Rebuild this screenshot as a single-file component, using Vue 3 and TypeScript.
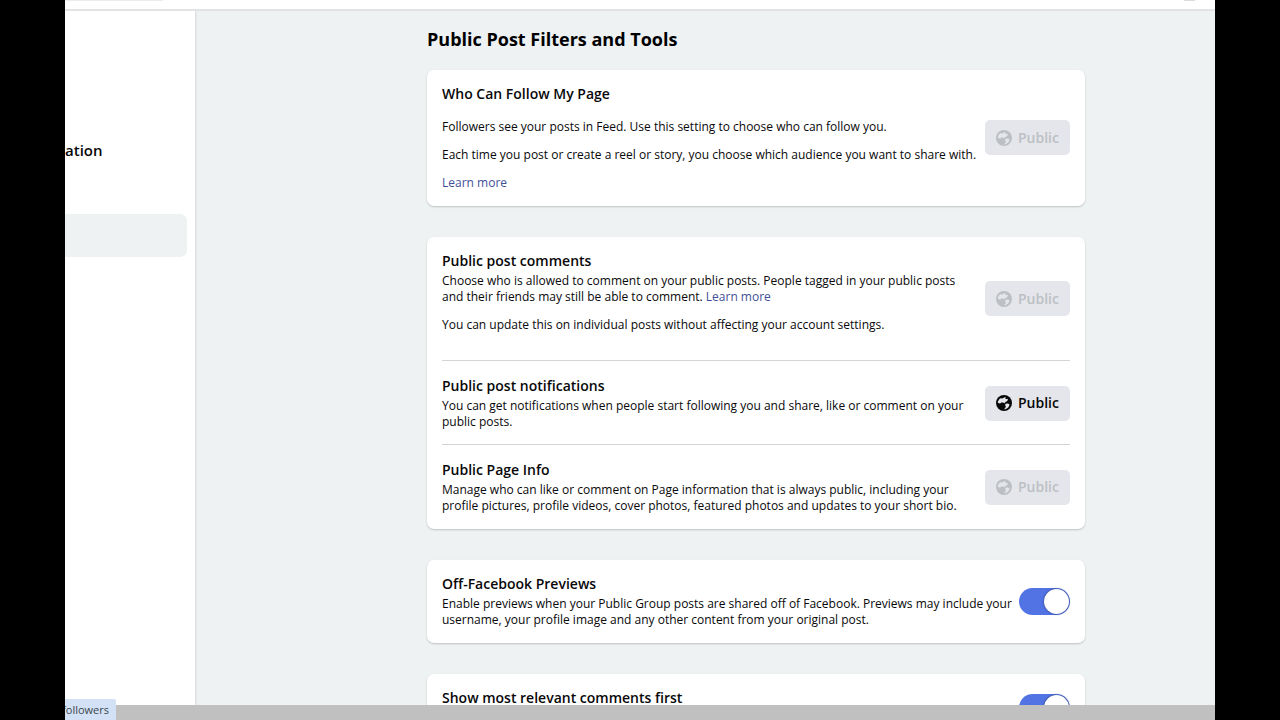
<script setup lang="ts">
import { ref } from 'vue'

interface AudienceRow {
  id: string
  title: string
  text: string
  link?: string
  note?: string
  enabled: boolean
}

const rows: AudienceRow[] = [
  {
    id: 'comments',
    title: 'Public post comments',
    text: 'Choose who is allowed to comment on your public posts. People tagged in your public posts and their friends may still be able to comment.',
    link: 'Learn more',
    note: 'You can update this on individual posts without affecting your account settings.',
    enabled: false,
  },
  {
    id: 'notifications',
    title: 'Public post notifications',
    text: 'You can get notifications when people start following you and share, like or comment on your public posts.',
    enabled: true,
  },
  {
    id: 'info',
    title: 'Public Page Info',
    text: 'Manage who can like or comment on Page information that is always public, including your profile pictures, profile videos, cover photos, featured photos and updates to your short bio.',
    enabled: false,
  },
]

const previews = ref(true)
const relevant = ref(true)
</script>

<template>
  <div class="frame">
    <svg class="defs" aria-hidden="true">
      <symbol id="globe" viewBox="0 0 16 16">
        <circle cx="8" cy="8" r="8" fill="currentColor" />
        <path
          class="land"
          d="M1.7 7.6C2 5.8 3 4.2 4.6 3.2L6.4 3.6 8 2.4 9.8 2.2 9.3 3.6 10.4 4.2 11.4 3.8 12 4.8 10.9 6.2 9.4 6.9 8.6 8.3 7 7.6 5.2 7.4 4.2 8.4 2.8 8.2Z"
        />
        <path class="land" d="M9.8 8.8L11.4 8.4 13.2 9 13.4 10.2 12.2 12.4 10.4 13.8 7.8 14.4 9.4 12.8 9.8 11.2 9 10Z" />
      </symbol>
    </svg>

    <header class="topbar">
      <span class="tab"></span>
      <span class="mark"></span>
    </header>
    <div class="body">
      <aside class="sidebar">
        <h2 class="side-title">ation</h2>
        <a class="side-item" href="#" aria-current="page"></a>
      </aside>

      <main class="content">
        <h1 class="page-title">Public Post Filters and Tools</h1>

        <section class="card">
          <div class="row">
            <div class="copy">
              <h3 class="title spaced">Who Can Follow My Page</h3>
              <p class="text">Followers see your posts in Feed. Use this setting to choose who can follow you.</p>
              <p class="text para">
                Each time you post or create a reel or story, you choose which audience you want to share with.
              </p>
              <p class="text para"><a class="link" href="#">Learn more</a></p>
            </div>
            <button class="audience" type="button" disabled>
              <svg class="globe" aria-hidden="true"><use href="#globe" /></svg>Public
            </button>
          </div>
        </section>

        <section class="card">
          <div v-for="row in rows" :key="row.id" class="row">
            <div class="copy">
              <h3 class="title">{{ row.title }}</h3>
              <p class="text">
                {{ row.text }} <a v-if="row.link" class="link" href="#">{{ row.link }}</a>
              </p>
              <p v-if="row.note" class="text para note">{{ row.note }}</p>
            </div>
            <button class="audience" type="button" :disabled="!row.enabled">
              <svg class="globe" aria-hidden="true"><use href="#globe" /></svg>Public
            </button>
          </div>
        </section>

        <section class="card">
          <div class="row">
            <div class="copy">
              <h3 class="title"><label for="previews">Off-Facebook Previews</label></h3>
              <p class="text">
                Enable previews when your Public Group posts are shared off of Facebook. Previews may include your
                username, your profile image and any other content from your original post.
              </p>
            </div>
            <input id="previews" v-model="previews" class="switch" type="checkbox" role="switch" />
          </div>
        </section>

        <section class="card">
          <div class="row short">
            <div class="copy">
              <h3 class="title"><label for="relevant">Show most relevant comments first</label></h3>
            </div>
            <input id="relevant" v-model="relevant" class="switch" type="checkbox" role="switch" />
          </div>
        </section>
      </main>
    </div>
    <footer class="taskbar"></footer>
    <div class="status"><span>followers</span></div>
  </div>
</template>

<style>
body {
  background: #000;
}
</style>

<style scoped>
.frame {
  position: relative;
  display: flex;
  flex-direction: column;
  height: 100vh;
  margin: 0 65px;
  overflow: hidden;
  background: #fff;
  color: #080809;
  font-family: 'Open Sans', 'Noto Sans', sans-serif;
  font-size: 12px;
  line-height: 16px;
}
.frame * {
  box-sizing: border-box;
}
.defs {
  position: absolute;
  width: 0;
  height: 0;
}
.topbar {
  display: flex;
  flex: none;
  justify-content: space-between;
  height: 11px;
  padding-right: 20px;
  border-bottom: 2px solid #e2e3e4;
  background: #fff;
}
.tab {
  width: 98px;
  height: 1px;
  background: #ececec;
}
.mark {
  width: 11px;
  height: 1px;
  background: #dcdcdc;
}
.body {
  display: flex;
  flex: 1;
  min-height: 0;
  overflow: hidden;
}
.sidebar {
  position: relative;
  flex: none;
  width: 130px;
  padding-top: 128px;
  background: #fff;
  box-shadow: 0 0 3px rgba(0, 0, 0, 0.2);
}
.side-title {
  margin: 0 0 53px;
  font-size: 15px;
  font-weight: 600;
  line-height: 22px;
}
.side-item {
  display: block;
  height: 43px;
  margin-right: 8px;
  border-radius: 0 7px 7px 0;
  background: #eef2f3;
}
.content {
  flex: 1;
  min-width: 0;
  padding: 15px 130px 0 232px;
  background: #eef2f3;
}
.page-title {
  margin: 0 0 17px;
  color: #000;
  font-size: 18px;
  font-weight: 700;
  line-height: 27px;
}
.card {
  margin-bottom: 31px;
  padding: 14px 15px 15px;
  border-radius: 7px;
  background: #fff;
  box-shadow: 0 1px 2px rgba(0, 0, 0, 0.2);
}
.row {
  display: flex;
  align-items: center;
  gap: 6px;
}
.row + .row {
  margin-top: 14px;
  padding-top: 15px;
  border-top: 1px solid #d3d5d8;
}
.short {
  min-height: 38px;
  align-items: stretch;
}
.short .switch {
  align-self: center;
}
.copy {
  flex: 1;
  min-width: 0;
}
.title {
  margin: 0 0 2px;
  font-size: 14px;
  font-weight: 600;
  line-height: 20px;
}
.spaced {
  margin-bottom: 15px;
}
.text {
  margin: 0;
}
.para {
  margin-top: 12px;
}
.note {
  margin-bottom: 13px;
}
.link {
  color: #415096;
  text-decoration: none;
}
.audience {
  display: flex;
  flex: none;
  align-items: center;
  justify-content: center;
  gap: 6px;
  width: 85px;
  height: 35px;
  padding: 0;
  border: 0;
  border-radius: 5px;
  background: #e4e6eb;
  color: #080809;
  font: 600 14px/20px 'Open Sans', 'Noto Sans', sans-serif;
}
.audience:disabled {
  color: #bcc0c4;
}
.globe {
  width: 16px;
  height: 16px;
}
.land {
  fill: #e4e6eb;
}
.switch {
  display: flex;
  flex: none;
  align-items: center;
  width: 51px;
  height: 27px;
  margin: 0;
  padding: 0 1px;
  appearance: none;
  border-radius: 14px;
  background: #5273e4;
}
.switch::before {
  width: 25px;
  height: 25px;
  border-radius: 50%;
  background: #fff;
  box-shadow: 0 0 2px #1c2b5c;
  content: '';
}
.switch:checked {
  justify-content: flex-end;
}
.taskbar {
  flex: none;
  height: 15px;
  background: #c0c0c0;
}
.status {
  position: absolute;
  bottom: 0;
  left: 0;
  display: flex;
  justify-content: flex-end;
  width: 51px;
  height: 21px;
  padding: 3px 7px 0 0;
  overflow: hidden;
  border-radius: 0 2px 0 0;
  background: #d3e1f7;
  color: #3b474b;
  font-size: 11px;
}
</style>
